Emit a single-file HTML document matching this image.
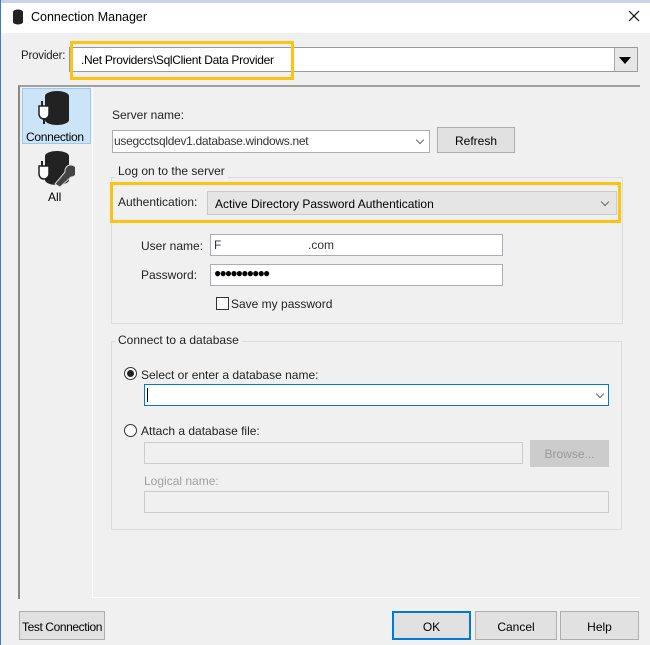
<!DOCTYPE html>
<html><head><style>
body{margin:0;width:650px;height:645px;background:#f0f0f0;font-family:"Liberation Sans",sans-serif;font-size:12px;color:#000;position:relative;overflow:hidden}
div,span{position:absolute;box-sizing:border-box}
.t{white-space:nowrap}
.in{background:#fff;border:1px solid #7a7a7a}
.btn{background:#e1e1e1;border:1px solid #adadad;text-align:center;white-space:nowrap}
.yl{border:3px solid #ffc20e}
.grp{border:1px solid #dcdcdc}
.chev{width:6px;height:6px;border-right:1px solid #666;border-bottom:1px solid #666;transform:rotate(45deg)}
</style></head><body>
<div style="left:0;top:0;width:650px;height:3px;background:#c9d5e6"></div>
<div style="left:0;top:3px;width:650px;height:30px;background:#fff"></div>
<div style="left:0;top:0;width:1px;height:645px;background:#3a7bd5"></div>
<svg style="position:absolute;left:11px;top:9px" width="14" height="16"><ellipse cx="7" cy="3" rx="5" ry="2.5" fill="#222"/><rect x="2" y="3" width="10" height="10" fill="#222"/><ellipse cx="7" cy="13" rx="5" ry="2.5" fill="#222"/></svg>
<span class="t" style="left:31px;top:10px;font-size:12.5px">Connection Manager</span>
<svg style="position:absolute;left:628px;top:10px" width="12" height="12"><path d="M1 1L11 11M11 1L1 11" stroke="#111" stroke-width="1.2"/></svg>

<span class="t" style="left:21px;top:50px;color:#222;font-size:11.5px;letter-spacing:-0.2px">Provider:</span>
<div class="in" style="left:69px;top:47px;width:569px;height:25px;border-color:#999"></div>
<div style="left:614px;top:48px;width:23px;height:23px;background:#e6e6e6;border-left:1px solid #aaa"></div>
<div style="left:619px;top:57px;width:0;height:0;border-left:6px solid transparent;border-right:6px solid transparent;border-top:7px solid #000"></div>
<div class="yl" style="left:70px;top:41px;width:224px;height:39px"></div>
<span class="t" style="left:81px;top:53px;letter-spacing:-0.3px">.Net Providers\SqlClient Data Provider</span>

<div style="left:18px;top:85px;width:622px;height:514px;border-left:2px solid #888;border-top:2px solid #a0a0a0;background:#f0f0f0"></div>
<div style="left:92px;top:87px;width:1px;height:511px;background:#fff"></div>
<div style="left:93px;top:597px;width:547px;height:1px;background:#fff"></div>
<div style="left:22px;top:88px;width:69px;height:56px;background:#cce4f7;border:1px solid #99c9ef"></div>
<svg style="position:absolute;left:35px;top:90px" width="40" height="38"><ellipse cx="22" cy="6" rx="12" ry="5" fill="#222"/><rect x="10" y="6" width="24" height="24" fill="#222"/><ellipse cx="22" cy="30" rx="12" ry="5" fill="#222"/><path d="M4 16h10v8a5 5 0 0 1-10 0z" fill="#fff" stroke="#222" stroke-width="1.5"/><rect x="6" y="11" width="2" height="5" fill="#222"/><rect x="10" y="11" width="2" height="5" fill="#222"/><rect x="8" y="28" width="2" height="6" fill="#222"/></svg>
<span class="t" style="left:26px;top:130px;letter-spacing:-0.3px">Connection</span>
<svg style="position:absolute;left:35px;top:150px" width="40" height="38"><ellipse cx="22" cy="6" rx="12" ry="5" fill="#222"/><rect x="10" y="6" width="24" height="24" fill="#222"/><ellipse cx="22" cy="30" rx="12" ry="5" fill="#222"/><path d="M4 16h10v8a5 5 0 0 1-10 0z" fill="#fff" stroke="#222" stroke-width="1.5"/><rect x="6" y="11" width="2" height="5" fill="#222"/><rect x="10" y="11" width="2" height="5" fill="#222"/><path d="M20 34 L30 22 A6 6 0 1 1 36 27 L25 37Z" fill="#444" stroke="#ddd"/></svg>
<span class="t" style="left:48px;top:190px">All</span>

<span class="t" style="left:112px;top:108px;color:#222">Server name:</span>
<div class="in" style="left:112px;top:130px;width:318px;height:23px;border-color:#abadb3"></div>
<span class="t" style="left:114px;top:134px;letter-spacing:-0.3px;color:#333">usegcctsqldev1.database.windows.net</span>
<div class="chev" style="left:417px;top:137px"></div>
<div class="btn" style="left:437px;top:127px;width:78px;height:26px;padding-top:6px">Refresh</div>

<div class="grp" style="left:111px;top:177px;width:512px;height:147px"></div>
<span class="t" style="left:115px;top:164px;background:#f0f0f0;padding:0 3px;color:#222">Log on to the server</span>
<div class="yl" style="left:110px;top:182px;width:511px;height:41px"></div>
<span class="t" style="left:118px;top:195px;color:#222">Authentication:</span>
<div style="left:207px;top:191px;width:410px;height:24px;background:#e5e5e5;border:1px solid #cacaca"></div>
<span class="t" style="left:215px;top:197px">Active Directory Password Authentication</span>
<div class="chev" style="left:602px;top:199px"></div>
<span class="t" style="left:141px;top:239px;color:#222">User name:</span>
<div class="in" style="left:210px;top:234px;width:293px;height:22px;border-color:#abadb3"></div>
<span class="t" style="left:214px;top:238px;color:#333">F&nbsp;&nbsp;&nbsp;&nbsp;&nbsp;&nbsp;&nbsp;&nbsp;&nbsp;&nbsp;&nbsp;&nbsp;&nbsp;&nbsp;&nbsp;&nbsp;&nbsp;&nbsp;&nbsp;&nbsp;&nbsp;&nbsp;&nbsp;&nbsp;&nbsp;&nbsp;.com</span>
<span class="t" style="left:141px;top:268px;color:#222">Password:</span>
<div class="in" style="left:210px;top:264px;width:293px;height:22px;border-color:#abadb3"></div>
<span class="t" style="left:214px;top:266px;font-size:12px;letter-spacing:-1.8px">●●●●●●●●●●</span>
<div style="left:216px;top:297px;width:13px;height:13px;background:#fff;border:1px solid #333"></div>
<span class="t" style="left:231px;top:297px;color:#222">Save my password</span>

<div class="grp" style="left:111px;top:341px;width:511px;height:189px"></div>
<span class="t" style="left:115px;top:333px;background:#f0f0f0;padding:0 3px;color:#222">Connect to a database</span>
<div style="left:124px;top:367px;width:13px;height:13px;border-radius:50%;border:1px solid #333;background:#fff"></div>
<div style="left:127px;top:370px;width:7px;height:7px;border-radius:50%;background:#222"></div>
<span class="t" style="left:141px;top:368px;color:#222">Select or enter a database name:</span>
<div class="in" style="left:144px;top:384px;width:465px;height:22px;border-color:#0078d7"></div>
<div style="left:147px;top:388px;width:1px;height:14px;background:#000"></div>
<div class="chev" style="left:597px;top:391px"></div>
<div style="left:124px;top:424px;width:13px;height:13px;border-radius:50%;border:1px solid #333;background:#fff"></div>
<span class="t" style="left:141px;top:424px;color:#222">Attach a database file:</span>
<div style="left:144px;top:442px;width:379px;height:22px;border:1px solid #ccc;background:#f0f0f0"></div>
<div style="left:530px;top:440px;width:79px;height:27px;background:#ccc;color:#999;text-align:center;padding-top:7px">Browse...</div>
<span class="t" style="left:144px;top:474px;color:#a0a0a0">Logical name:</span>
<div style="left:144px;top:491px;width:465px;height:22px;border:1px solid #ccc;background:#f0f0f0"></div>

<div class="btn" style="left:19px;top:611px;width:86px;height:29px;padding-top:8px;letter-spacing:-0.4px">Test Connection</div>
<div class="btn" style="left:392px;top:611px;width:79px;height:29px;padding-top:7px;border:2px solid #0078d7">OK</div>
<div class="btn" style="left:475px;top:611px;width:82px;height:29px;padding-top:8px">Cancel</div>
<div class="btn" style="left:560px;top:611px;width:79px;height:29px;padding-top:8px">Help</div>
</body></html>
